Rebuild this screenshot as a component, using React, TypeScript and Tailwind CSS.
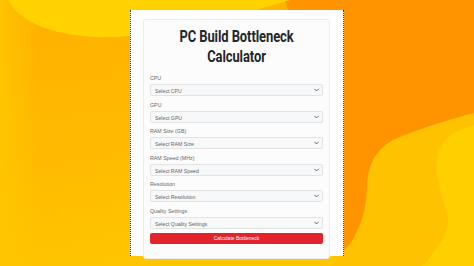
import React from "react";

const fields = [
  { label: "CPU", placeholder: "Select CPU" },
  { label: "GPU", placeholder: "Select GPU" },
  { label: "RAM Size (GB)", placeholder: "Select RAM Size" },
  { label: "RAM Speed (MHz)", placeholder: "Select RAM Speed" },
  { label: "Resolution", placeholder: "Select Resolution" },
  { label: "Quality Settings", placeholder: "Select Quality Settings" },
];

function Background() {
  return (
    <svg
      className="absolute inset-0 w-full h-full"
      viewBox="0 0 474 266"
      preserveAspectRatio="none"
    >
      <defs>
        <linearGradient id="lv" x1="0" y1="0" x2="0.3" y2="1">
          <stop offset="0" stopColor="#ffb000" />
          <stop offset="0.6" stopColor="#ffbb00" />
          <stop offset="1" stopColor="#ffc500" />
        </linearGradient>
        <linearGradient id="edge" x1="0" y1="0" x2="1" y2="0">
          <stop offset="0" stopColor="#ffc800" stopOpacity="0.8" />
          <stop offset="1" stopColor="#ffc800" stopOpacity="0" />
        </linearGradient>
      </defs>
      <rect x="0" y="0" width="474" height="266" fill="#ff9300" />
      <path d="M0 0 L285 0 C300 50 320 140 342 240 L345 266 L0 266 Z" fill="url(#lv)" />
      <rect x="0" y="0" width="40" height="266" fill="url(#edge)" />
      <path d="M8 0 C20 24 60 38 110 37 C160 36 220 22 290 0 Z" fill="#ffd200" />
      <path
        d="M474 113 C455 118 420 128 393 140 C375 150 368 165 367 187 C366 205 364 222 350 244 L330 266 L474 266 Z"
        fill="#ffc200"
      />
      <path
        d="M474 125 C455 130 440 140 437 157 C434 172 440 187 447 213 C452 230 440 245 423 266 L474 266 Z"
        fill="#ffd000"
      />
    </svg>
  );
}

function Chevron() {
  return (
    <svg
      className="absolute right-[4px] top-1/2 -translate-y-1/2 w-[5px] h-[5px]"
      viewBox="0 0 16 16"
      fill="none"
      stroke="#444"
      strokeWidth="2.5"
      strokeLinecap="round"
      strokeLinejoin="round"
    >
      <path d="M2 5l6 6 6-6" />
    </svg>
  );
}

export default function App() {
  return (
    <div className="relative w-[474px] h-[266px] overflow-hidden">
      <Background />
      <div className="relative flex justify-center pt-[10px]">
        <div className="w-[214px] h-[246px] bg-white border-x border-dotted border-[#3a3a3a] pl-[12px] pr-[13px] pt-[9px]">
          <div
            className="h-[240px] border border-[#ececec] rounded-[3px] bg-[#fcfcfc] px-[6px] pt-[7px]"
            style={{ fontFamily: "'Liberation Sans', Arial, sans-serif" }}
          >
            <h1
              className="text-center text-[16px] leading-[20px] font-bold text-[#23272b] mb-[7px] tracking-[-0.1px] scale-x-[0.81]"
              style={{ fontFamily: "Roboto, sans-serif" }}
            >
              PC Build Bottleneck
              <br />
              Calculator
            </h1>
            {fields.map((f) => (
              <div key={f.label} className="mb-[4.6px]">
                <label className="block text-[5.3px] leading-[8px] text-[#666] mb-[2px]">
                  {f.label}
                </label>
                <div className="relative">
                  <select
                    defaultValue=""
                    className="appearance-none block w-full h-[12px] text-[5.2px] leading-[12px] py-0 pl-[4px] pr-[10px] text-[#666] bg-[#f7f8f9] border border-[#e3e3e3] rounded-[2px] outline-none"
                    style={{ fontFamily: "'Liberation Sans', Arial, sans-serif" }}
                  >
                    <option value="">{f.placeholder}</option>
                  </select>
                  <Chevron />
                </div>
              </div>
            ))}
            <button
              className="block w-full h-[11px] mt-[-0.6px] bg-[#e3232b] text-white text-[5px] leading-[11px] rounded-[2px]"
              style={{ fontFamily: "'Liberation Sans', Arial, sans-serif" }}
            >
              Calculate Bottleneck
            </button>
          </div>
        </div>
      </div>
    </div>
  );
}
